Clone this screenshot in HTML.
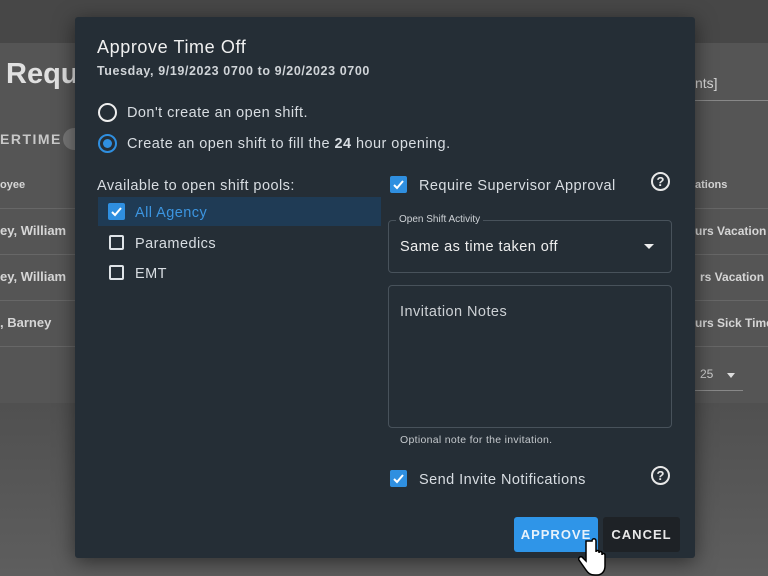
<!DOCTYPE html>
<html><head><style>
*{box-sizing:border-box;margin:0;padding:0}
body{width:768px;height:576px;overflow:hidden;background:#474747;font-family:"Liberation Sans",sans-serif;position:relative}
.bg{position:absolute;left:0;top:43px;width:768px;height:360px;background:#555}
.bgb{position:absolute;left:0;top:403px;width:768px;height:173px;background:linear-gradient(#505050,#5e5e5e)}
.bt{position:absolute;color:#d6d6d6;font-weight:bold;white-space:nowrap}
.line{position:absolute;height:1px;background:#676767}
.modal{position:absolute;left:75px;top:17px;width:620px;height:541px;background:#252e36;border-radius:3px;box-shadow:0 4px 20px rgba(0,0,0,.5);color:#d8dde2}
.a{position:absolute;white-space:nowrap}
.t{font-size:14.5px;letter-spacing:.45px;line-height:17px;margin-top:2px}
.cb{position:absolute;width:15px;height:15px;border:2px solid #dfe3e7;border-radius:2px}
.cbc{position:absolute;width:17px;height:17px;background:#2f8fe0;border-radius:2px}
.help{position:absolute;width:19px;height:19px;border:2px solid #e8e8e8;border-radius:50%;color:#e8e8e8;font-size:13px;font-weight:bold;text-align:center;line-height:15px}
</style></head><body>
<div class="bg"></div><div class="bgb"></div>
<div class="bt" style="left:6px;top:58px;font-size:29px;color:#e0e0e0">Requ</div>
<div class="bt" style="left:0;top:131px;font-size:14px;letter-spacing:1.5px;color:#c8c8c8">ERTIME</div>
<div style="position:absolute;left:63px;top:128px;width:14px;height:22px;background:#777;border-radius:11px 0 0 11px"></div>
<div class="bt" style="left:0;top:179px;font-size:11px">oyee</div>
<div class="line" style="left:0;top:208px;width:75px"></div>
<div class="bt" style="left:0;top:223px;font-size:13px">ey, William</div>
<div class="line" style="left:0;top:254px;width:75px"></div>
<div class="bt" style="left:0;top:269px;font-size:13px">ey, William</div>
<div class="line" style="left:0;top:300px;width:75px"></div>
<div class="bt" style="left:0;top:315px;font-size:13px">, Barney</div>
<div class="line" style="left:0;top:346px;width:75px"></div>
<div class="a" style="left:695px;top:75px;font-size:14px;color:#d8d8d8">nts]</div>
<div class="line" style="left:695px;top:100px;width:73px;background:#888"></div>
<div class="bt" style="left:695px;top:179px;font-size:11px">ations</div>
<div class="line" style="left:695px;top:208px;width:73px"></div>
<div class="bt" style="left:695px;top:224px;font-size:12px">urs Vacation</div>
<div class="line" style="left:695px;top:254px;width:73px"></div>
<div class="bt" style="left:700px;top:270px;font-size:12px">rs Vacation (C</div>
<div class="line" style="left:695px;top:300px;width:73px"></div>
<div class="bt" style="left:695px;top:316px;font-size:12px">urs Sick Time</div>
<div class="line" style="left:695px;top:346px;width:73px"></div>
<div class="a" style="left:700px;top:367px;font-size:12px;color:#ccc">25</div>
<div style="position:absolute;left:727px;top:373px;border:4px solid transparent;border-top:5px solid #ddd"></div>
<div class="line" style="left:695px;top:390px;width:48px;background:#888"></div>

<div class="modal">
<div class="a" style="left:22px;top:20px;font-size:18px;letter-spacing:.6px;color:#f0f0f0">Approve Time Off</div>
<div class="a" style="left:22px;top:47px;font-size:12.5px;font-weight:bold;letter-spacing:.6px;color:#d0d4d8">Tuesday, 9/19/2023 0700 to 9/20/2023 0700</div>
<div style="position:absolute;left:23px;top:86px;width:19px;height:19px;border:2px solid #eee;border-radius:50%"></div>
<div class="a t" style="left:52px;top:86px">Don't create an open shift.</div>
<div style="position:absolute;left:23px;top:117px;width:19px;height:19px;border:2px solid #2f8fe0;border-radius:50%"><div style="position:absolute;left:3px;top:3px;width:9px;height:9px;background:#2f8fe0;border-radius:50%"></div></div>
<div class="a t" style="left:52px;top:117px">Create an open shift to fill the <b>24</b> hour opening.</div>
<div class="a t" style="left:22px;top:159px">Available to open shift pools:</div>
<div style="position:absolute;left:23px;top:180px;width:283px;height:29px;background:#1f3b55"></div>
<div class="cbc" style="left:33px;top:186px"><svg width="17" height="17"><path d="M4 9l3 3 6-7" stroke="#fff" stroke-width="2" fill="none"/></svg></div>
<div class="a t" style="left:60px;top:186px;color:#3c95e0">All Agency</div>
<div class="cb" style="left:34px;top:218px"></div>
<div class="a t" style="left:60px;top:217px">Paramedics</div>
<div class="cb" style="left:34px;top:248px"></div>
<div class="a t" style="left:60px;top:247px">EMT</div>

<div class="cbc" style="left:315px;top:159px"><svg width="17" height="17"><path d="M4 9l3 3 6-7" stroke="#fff" stroke-width="2" fill="none"/></svg></div>
<div class="a t" style="left:344px;top:159px">Require Supervisor Approval</div>
<div class="help" style="left:576px;top:155px">?</div>
<div style="position:absolute;left:313px;top:203px;width:284px;height:53px;border:1px solid #48525b;border-radius:4px"></div>
<div class="a" style="left:321px;top:197px;font-size:10px;background:#252e36;padding:0 3px;color:#cfd3d7">Open Shift Activity</div>
<div class="a t" style="left:325px;top:220px;color:#eee">Same as time taken off</div>
<div style="position:absolute;left:569px;top:227px;border:5px solid transparent;border-top:5px solid #eee"></div>
<div style="position:absolute;left:313px;top:268px;width:284px;height:143px;border:1px solid #48525b;border-radius:4px"></div>
<div class="a t" style="left:325px;top:285px;color:#cdd1d5">Invitation Notes</div>
<div class="a" style="left:325px;top:417px;font-size:10.5px;letter-spacing:.3px;color:#c5c9cd">Optional note for the invitation.</div>
<div class="cbc" style="left:315px;top:453px"><svg width="17" height="17"><path d="M4 9l3 3 6-7" stroke="#fff" stroke-width="2" fill="none"/></svg></div>
<div class="a t" style="left:344px;top:453px">Send Invite Notifications</div>
<div class="help" style="left:576px;top:449px">?</div>
<div style="position:absolute;left:439px;top:500px;width:84px;height:35px;background:#2f95e8;border-radius:3px;color:#e8f2fb;font-weight:bold;font-size:13px;letter-spacing:1px;text-align:center;line-height:35px">APPROVE</div>
<div style="position:absolute;left:528px;top:500px;width:77px;height:35px;background:#1e2226;border-radius:3px;color:#e8e8e8;font-weight:bold;font-size:13px;letter-spacing:1px;text-align:center;line-height:35px">CANCEL</div>
</div>
<svg style="position:absolute;left:578px;top:538px" width="30" height="38"><path d="M8 3v20l-4-4c-2-1-4 1-3 3l7 10c2 3 4 5 9 5h2c5 0 8-4 8-9V17c0-2-3-2-3 0v-2c0-2-3-2-3 0v-1c0-2-3-2-3 0V3c0-3-4-3-4 0z" fill="#fff" stroke="#000" stroke-width="1.5"/></svg>
</body></html>
